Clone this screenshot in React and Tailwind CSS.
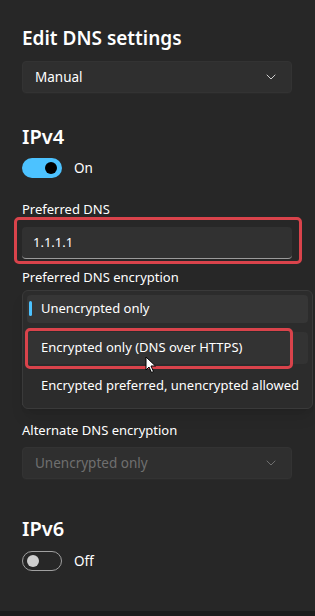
import { ChevronDown } from "lucide-react";

const font = { fontFamily: '"Segoe UI", "Noto Sans", sans-serif' };

function Toggle({ on }) {
  return on ? (
    <div className="flex h-5 w-10 items-center justify-end rounded-full bg-[#4cc2ff] pr-[5px]">
      <div className="h-3 w-3 rounded-full bg-black" />
    </div>
  ) : (
    <div className="flex h-5 w-10 items-center rounded-full border border-[#a0a0a0] pl-1">
      <div className="h-3 w-3 rounded-full bg-[#cfcfcf]" />
    </div>
  );
}

function Select({ value, disabled }) {
  return (
    <div className="flex h-8 w-[270px] items-center justify-between rounded-[4px] border border-[#333] bg-[#2f2f2f] pl-3 pr-3 shadow-[0_1px_0_#2a2a2a]">
      <span className={"text-[13.5px] " + (disabled ? "text-[#6f6f6f]" : "text-white")}>{value}</span>
      <ChevronDown size={16} strokeWidth={1.5} className={disabled ? "text-[#6f6f6f]" : "text-[#cfcfcf]"} />
    </div>
  );
}

export default function App() {
  return (
    <div className="relative h-[616px] w-[315px] overflow-hidden bg-[#272727] text-white" style={font}>
      <div className="flex flex-col pl-[22px] pt-[24px]">
        <h1 className="text-[19px] font-semibold leading-[28px]">Edit DNS settings</h1>
        <div className="mt-[9px]">
          <Select value="Manual" />
        </div>

        <h2 className="mt-[30px] text-[20px] font-semibold leading-[28px]">IPv4</h2>
        <div className="mt-[7px] flex items-center gap-3">
          <Toggle on />
          <span className="text-[13.5px]">On</span>
        </div>

        <label className="mt-[21px] text-[13px] leading-5">Preferred DNS</label>
        <div className="relative mt-[8px]">
          <div className="flex h-8 w-[270px] items-center rounded-[4px] border-b border-[#9a9a9a] bg-[#313131] pl-[11px] text-[13px]">
            1.1.1.1
          </div>
          <div className="absolute -left-[8px] -top-[10px] h-[47px] w-[288px] rounded-[5px] border-[3px] border-[#d9434b]" />
        </div>

        <label className="mt-[8px] text-[13px] leading-5">Preferred DNS encryption</label>
        {/* combobox, alternate DNS label and field sit under the open flyout */}
        <div className="mt-[7px] h-8 w-[270px] rounded-[4px] bg-[#2f2f2f]" />
        <div className="mt-[14px] h-5" />
        <div className="mt-[14px] h-8 w-[270px] rounded-[4px] border-b border-[#9a9a9a] bg-[#313131]" />

        <label className="mt-[14px] text-[13px] leading-5">Alternate DNS encryption</label>
        <div className="mt-[7px]">
          <Select value="Unencrypted only" disabled />
        </div>

        <h2 className="mt-[36px] text-[20px] font-semibold leading-[28px]">IPv6</h2>
        <div className="mt-[8px] flex items-center gap-3">
          <Toggle />
          <span className="text-[13.5px]">Off</span>
        </div>
      </div>

      <div className="absolute left-[22px] top-[290px] flex h-[119px] w-[291px] flex-col gap-[4px] rounded-[6px] border border-[#3a3a3a] bg-[#2c2c2c] px-[4px] py-[4px] shadow-lg">
        <div className="flex h-[28px] items-center rounded-[4px] bg-[#363636]">
          <div className="ml-[2px] h-[15px] w-[3px] rounded-full bg-[#4cc2ff]" />
          <span className="ml-[9px] text-[13px]">Unencrypted only</span>
        </div>
        <div className="relative mt-[5px] flex h-[33px] items-center rounded-[4px] bg-[#333333]">
          <span className="ml-[14px] text-[13px]">Encrypted only (DNS over HTTPS)</span>
          <div className="absolute -left-[2px] -top-[4px] h-[41px] w-[268px] rounded-[5px] border-[3px] border-[#d9434b]" />
        </div>
        <div className="flex h-[36px] items-center">
          <span className="ml-[14px] whitespace-nowrap text-[13px]">Encrypted preferred, unencrypted allowed</span>
        </div>
      </div>

      <svg className="absolute left-[145px] top-[356px]" width="12" height="18" viewBox="0 0 12 18">
        <path d="M1 1 L1 14 L4 11 L6.5 16.5 L8.5 15.5 L6 10 L10.5 10 Z" fill="#fff" stroke="#000" strokeWidth="1" />
      </svg>

      <div className="absolute bottom-0 left-0 h-[5px] w-full bg-[#1c1c1c]" />
    </div>
  );
}
